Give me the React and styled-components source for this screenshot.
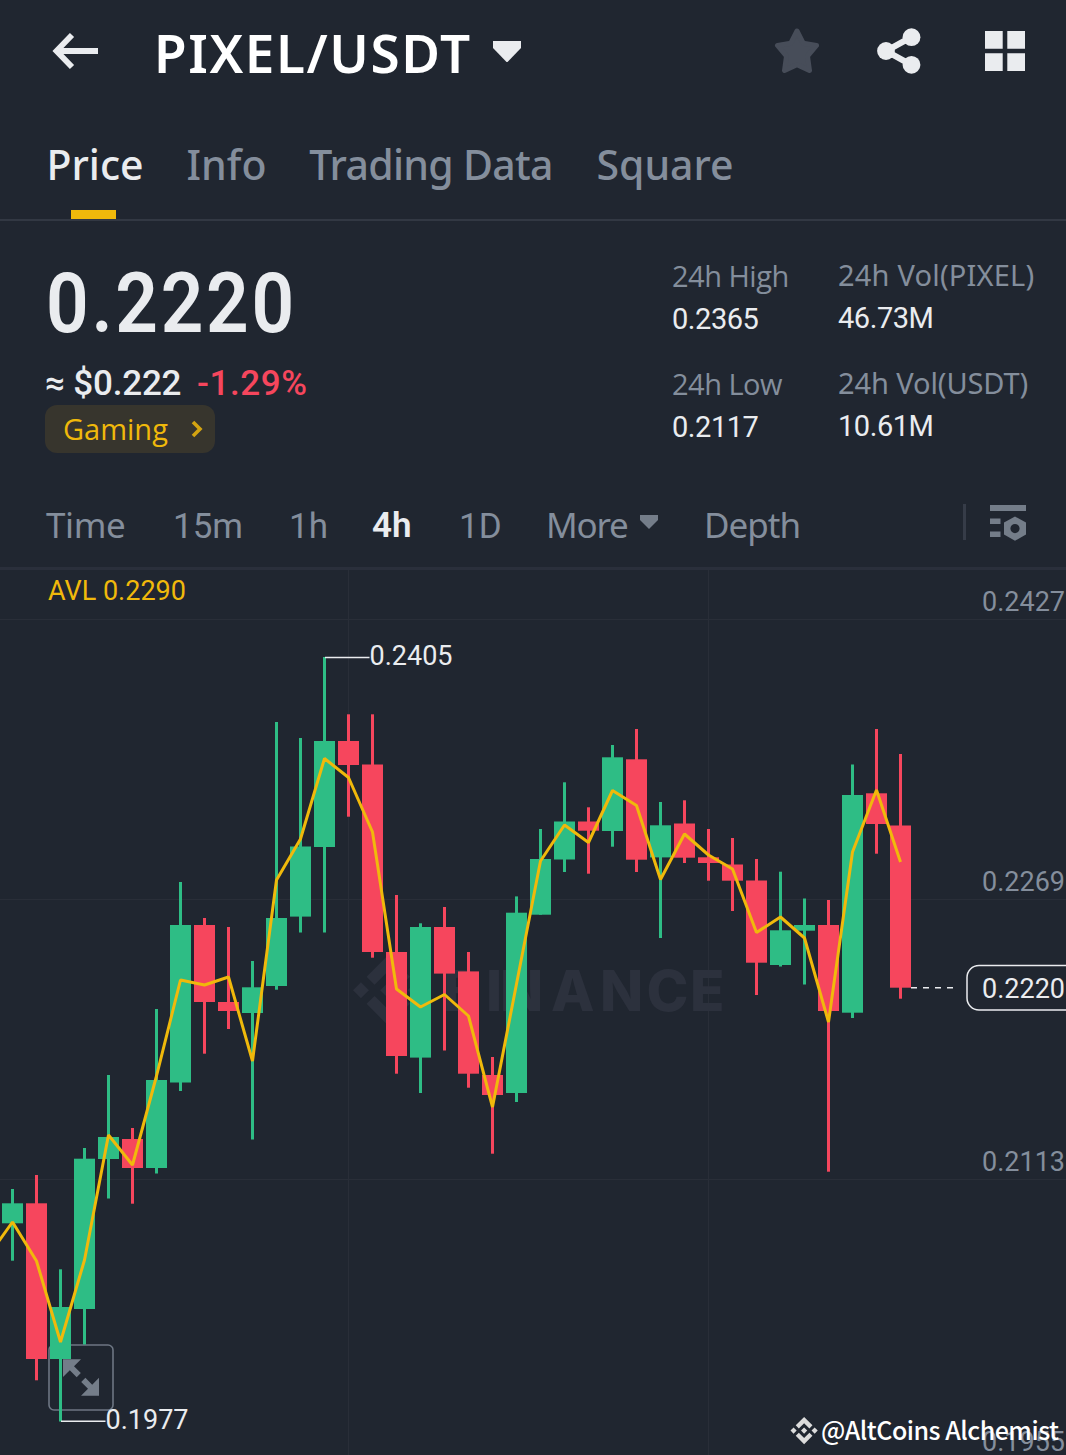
import React from 'react'
import styled, { createGlobalStyle } from 'styled-components'

const humanist = '"Noto Sans", "Open Sans", sans-serif'
const humanistG = '"Open Sans", "Noto Sans", sans-serif'
const digits = 'Roboto, "Liberation Sans", sans-serif'

const c = {
  bg: '#202630',
  line: '#323843',
  text: '#eaecef',
  muted: '#848e9c',
  icon: '#747d89',
  up: '#2ebd85',
  down: '#f6465d',
  brand: '#f0b90b',
}

const GlobalStyle = createGlobalStyle`
  * { box-sizing: border-box; }
  body { margin: 0; background: ${c.bg}; }
  svg { display: block; flex: none; }
`

const Screen = styled.main`
  width: 1066px;
  height: 1455px;
  overflow: hidden;
  display: flex;
  flex-direction: column;
  background: ${c.bg};
  color: ${c.text};
  font-family: ${humanist};
`

const Label = styled.span`
  display: block;
  white-space: nowrap;
  width: ${(p) => (p.$w ? `${p.$w}px` : 'auto')};
  font-family: ${(p) => p.$font || humanist};
  letter-spacing: ${(p) => p.$track || 0}px;
`

const Header = styled.header`
  height: 102px;
  flex: none;
  display: flex;
  align-items: center;
  padding: 0 41px 0 52px;
`

const Title = styled(Label).attrs({ as: 'h1' })`
  margin: 3px 24px 0 56px;
  font-size: 53px;
  line-height: 64px;
  font-weight: 600;
  color: #fff;
`

const Actions = styled.div`
  margin-left: auto;
  display: flex;
  align-items: center;
  gap: 58px;
`

const Tabs = styled.nav`
  flex: none;
  height: 119px;
  padding: 37px 0 0 47px;
  display: flex;
  gap: 45px;
  border-bottom: 2px solid ${c.line};
`

const Tab = styled.div`
  width: ${(p) => p.$w}px;
  display: flex;
  flex-direction: column;
  align-items: center;
  color: ${(p) => (p.$active ? c.text : c.muted)};
  font-size: 41px;
  line-height: 50px;
  font-weight: 500;
`

const TabBar = styled.i`
  width: 45px;
  height: 9px;
  margin: 21px 4px 0 0;
  background: ${c.brand};
`

const Summary = styled.section`
  flex: none;
  height: 254px;
  display: flex;
  padding: 34px 0 0 45px;
`

const Quote = styled.div`
  width: 627px;
  padding-top: 7px;
`

/* narrowed so the digits keep a DIN-like proportion */
const Price = styled(Label)`
  margin-left: 1px;
  font-size: 83px;
  line-height: 83px;
  font-weight: 600;
  transform: scaleX(0.9);
  transform-origin: left;
`

const SubPrice = styled.div`
  display: flex;
  margin-top: 19px;
  font-size: 35px;
  line-height: 40px;
  font-weight: 500;
`

const Change = styled(Label)`
  color: ${c.down};
`

const Chip = styled.div`
  display: flex;
  align-items: center;
  width: 170px;
  height: 48px;
  margin-top: 1px;
  padding: 0 12px 0 18px;
  justify-content: space-between;
  border-radius: 12px;
  background: #37352d;
  color: ${c.brand};
  font-size: 29px;
  line-height: 40px;
`

const Stats = styled.div`
  width: ${(p) => p.$w}px;
  margin-top: ${(p) => p.$top || 0}px;
  display: flex;
  flex-direction: column;
  gap: 23px;
  font-size: 29px;
  line-height: 42px;
`

const StatName = styled(Label)`
  color: ${c.muted};
  margin-bottom: 1px;
`

const Periods = styled.nav`
  flex: none;
  height: 95px;
  padding: 25px 40px 0 46px;
  display: flex;
  border-bottom: 3px solid #2a2f3b;
  font-size: 35px;
  line-height: 50px;
  color: ${c.muted};
`

const Period = styled(Label)`
  color: ${(p) => (p.$active ? c.text : 'inherit')};
  font-weight: ${(p) => (p.$active ? 600 : 400)};
  padding-top: ${(p) => (p.$font && !p.$active ? 2 : p.$active ? 1 : 0)}px;
`

const MoreCaret = styled.svg`
  margin: 15px 46px 0 0;
`

const Tools = styled.div`
  height: 36px;
  margin-top: 4px;
  margin-left: auto;
  padding-left: 24px;
  border-left: 3px solid #363c48;
`

const Chart = styled.svg`
  font-family: ${digits};
  font-size: 27px;
`

// [up, high, body top, body bottom, low, average]
const candles = [
  [1, 1189, 1203.3, 1223.3, 1260.7, 1222],
  [0, 1175, 1203.3, 1359, 1380.3, 1261],
  [1, 1269.3, 1307, 1359, 1421.5, 1342],
  [1, 1148, 1158.7, 1309, 1344.5, 1260],
  [1, 1075, 1137, 1159, 1198.5, 1135],
  [0, 1128, 1139, 1168, 1203.7, 1165],
  [1, 1009, 1080, 1168, 1173.5, 1076],
  [1, 882, 925, 1082.5, 1091, 980],
  [0, 918, 925, 1002, 1053.7, 985],
  [0, 927, 1002, 1011, 1029, 977],
  [1, 961, 987.3, 1013, 1139.5, 1061],
  [1, 722, 918, 986, 989.7, 880],
  [1, 738, 846.5, 916.6, 932.5, 839],
  [1, 657, 741, 847, 932.5, 758.5],
  [0, 714.3, 741, 765, 816.7, 777.5],
  [0, 714.3, 764.5, 952, 957.7, 832],
  [0, 895, 952, 1056, 1073.7, 989],
  [1, 923.3, 927, 1057.6, 1093, 1007],
  [0, 907, 927, 973.6, 1050.5, 994.5],
  [0, 952, 971.4, 1073.7, 1087.7, 1016],
  [0, 1057, 1075, 1095, 1153.7, 1107],
  [1, 896.4, 912.7, 1093, 1102, 984],
  [1, 829, 859, 914.7, 914.7, 861],
  [1, 782.3, 821.5, 859.5, 872, 825],
  [0, 807.3, 821.5, 830.7, 873.7, 842.5],
  [1, 745, 757.3, 831, 846.7, 790.5],
  [0, 729, 759.3, 859.7, 872, 805.5],
  [1, 802, 825.3, 857.4, 938, 879.5],
  [0, 800.3, 823.5, 857.7, 863, 834],
  [0, 829, 857.3, 863, 880.7, 855],
  [0, 838, 864.5, 880.7, 911, 869],
  [0, 859, 880.5, 962.7, 995, 932.5],
  [1, 871.7, 930.3, 965, 966.5, 917],
  [1, 898.5, 925, 930.7, 984.5, 938],
  [0, 900, 925, 1011, 1171.7, 1022],
  [1, 764.5, 795, 1012.7, 1018, 852],
  [0, 729, 793.3, 824, 853.7, 790],
  [0, 754, 825.5, 987.7, 998.7, 862],
]

const average = '-1,1241 ' + candles.map((d, i) => `${12.5 + i * 24},${d[5]}`).join(' ')

const BinanceMark = () => (
  <>
    <path d="M38.73 53.2l24.59-24.58 24.6 24.6 14.3-14.31L63.32 0l-38.9 38.9z" />
    <path d="M0 63.31L14.3 49l14.31 14.31-14.31 14.3z" />
    <path d="M38.73 73.41L63.32 98l24.6-24.6 14.31 14.29-38.91 38.92-38.91-38.88z" />
    <path d="M98 63.31L112.3 49l14.31 14.3-14.31 14.32z" />
    <path d="M77.83 63.3L63.32 48.78 48.81 63.28l14.51 14.5z" />
  </>
)

const PriceChart = () => (
  <Chart width="1066" height="885" viewBox="0 570 1066 885">
    <path
      d="M0 619.5H1066M0 899.5H1066M0 1179.5H1066M348.5 570V1455M708.5 570V1455"
      stroke="#292e38"
      fill="none"
    />

    <g fill="#2c313d">
      <g transform="translate(353 955) scale(.557)">
        <BinanceMark />
      </g>
      <text
        x="443 486 500 551 600 646.5 690"
        y="1010.5"
        fontFamily="Inter, sans-serif"
        fontWeight="800"
        fontSize="56.5"
      >
        BINANCE
      </text>
    </g>

    <rect x="49" y="1345" width="64" height="65" rx="5" fill="none" stroke="#6d7683" strokeWidth="1.6" />
    <g fill="#747d89">
      <path d="M63 1359.3H81L74 1366.2L80.8 1373L76.7 1377.2L69.8 1370.3L63 1377Z" />
      <path d="M99 1395.8H81L88 1388.8L81.2 1382L85.4 1377.8L92.2 1384.7L99 1377.7Z" />
    </g>

    {candles.map(([up, high, top, bottom, low], i) => (
      <g key={i} fill={up ? c.up : c.down}>
        <rect x={11 + i * 24} y={high} width="3" height={low - high} />
        <rect x={2 + i * 24} y={top} width="21" height={bottom - top} />
      </g>
    ))}
    <polyline points={average} fill="none" stroke={c.brand} strokeWidth="3" strokeLinejoin="bevel" />

    <g fill="none" stroke={c.text} strokeWidth="1.5">
      <path d="M325 657.5H369.5M61 1421.2H105.5" />
      <path d="M911 987.8H955" strokeDasharray="6 6" />
      <rect x="967" y="965.5" width="130" height="44.5" rx="12" fill={c.bg} />
    </g>

    <text x="48" y="600" fill={c.brand} textLength="138">AVL 0.2290</text>
    <g fill={c.text}>
      <text x="369.5" y="665">0.2405</text>
      <text x="105.5" y="1429">0.1977</text>
      <text x="982" y="997.7">0.2220</text>
    </g>
    <g fill={c.muted}>
      <text x="982" y="611">0.2427</text>
      <text x="982" y="891">0.2269</text>
      <text x="982" y="1171">0.2113</text>
      <text x="982" y="1451">0.1955</text>
    </g>

    <g transform="translate(790.5 1417) scale(.215)" fill="#dcdcdc">
      <BinanceMark />
    </g>
    <text
      x="821"
      y="1440"
      fill="#fff"
      fontFamily='"Noto Sans CJK SC", sans-serif'
      fontSize="25"
      fontWeight="500"
      textLength="238"
    >
      @AltCoins Alchemist
    </text>
  </Chart>
)

const App = () => {
  return (
    <>
      <GlobalStyle />
      <Screen>
        <Header>
          <svg width="46" height="36" viewBox="0 0 46 36" fill="none" stroke={c.text} strokeWidth="5.8">
            <path d="M4 18H46M20 2L4.5 18L20 34" />
          </svg>
          <Title $w={315} $track={1.6}>PIXEL/USDT</Title>
          <svg width="28" height="21" viewBox="0 0 28 21" fill={c.text}>
            <path d="M0 0H28V7L14 21.5L0 7Z" />
          </svg>
          <Actions>
            <svg width="45" height="46" viewBox="0 0 45 46">
              <path
                d="M23 3L29.2 15.2L42.5 17.5L33.5 28.2L35.5 42.5L23 36.8L10.5 42.5L12.5 28.2L3.5 17.5L16.8 15.2Z"
                fill="#474d59"
                stroke="#474d59"
                strokeWidth="5"
                strokeLinejoin="round"
              />
            </svg>
            <svg width="44" height="46" viewBox="0 0 44 46" fill={c.text}>
              <path d="M34.5 9L9 23L34.5 37" fill="none" stroke={c.text} strokeWidth="6" />
              <circle cx="34.5" cy="9.2" r="8.9" />
              <circle cx="9" cy="23" r="8.9" />
              <circle cx="34.5" cy="36.8" r="8.9" />
            </svg>
            <svg width="46" height="40" viewBox="-6 0 46 40" fill={c.text}>
              <path d="M0 0H17.7V17.7H0ZM22.3 0H40V17.7H22.3ZM0 22.3H17.7V40H0ZM22.3 22.3H40V40H22.3Z" />
            </svg>
          </Actions>
        </Header>

        <Tabs>
          <Tab $w={96} $active>
            <Label>Price</Label>
            <TabBar />
          </Tab>
          <Tab $w={77}>
            <Label>Info</Label>
          </Tab>
          <Tab $w={242}>
            <Label $track={-0.7}>Trading Data</Label>
          </Tab>
          <Tab $w={136}>
            <Label>Square</Label>
          </Tab>
        </Tabs>

        <Summary>
          <Quote>
            <Price $font={digits} $track={3}>0.2220</Price>
            <SubPrice>
              <Label $font={digits} $w={152} $track={-0.2}>≈ $0.222</Label>
              <Change $font={digits} $track={0.6}>-1.29%</Change>
            </SubPrice>
            <Chip>
              <Label $font={humanistG}>Gaming</Label>
              <svg width="12" height="18" viewBox="0 0 12 18" fill="none" stroke="#d3a411" strokeWidth="3.6">
                <path d="M2 2L9 9L2 16" />
              </svg>
            </Chip>
          </Quote>
          <Stats $w={166}>
            <div>
              <StatName $font={humanistG} $track={-0.5}>24h High</StatName>
              <Label $font={digits} $track={-0.45}>0.2365</Label>
            </div>
            <div>
              <StatName $font={humanistG} $track={-0.5}>24h Low</StatName>
              <Label $font={digits} $track={-0.45}>0.2117</Label>
            </div>
          </Stats>
          <Stats $w={228} $top={-1}>
            <div>
              <StatName $track={0.2}>24h Vol(PIXEL)</StatName>
              <Label $font={digits} $track={-0.45}>46.73M</Label>
            </div>
            <div>
              <StatName $track={-0.1}>24h Vol(USDT)</StatName>
              <Label $font={digits} $track={-0.45}>10.61M</Label>
            </div>
          </Stats>
        </Summary>

        <Periods>
          <Period $w={127} $track={-0.4}>Time</Period>
          <Period $w={116} $font={digits}>15m</Period>
          <Period $w={83} $font={digits}>1h</Period>
          <Period $w={87} $font={digits} $active>4h</Period>
          <Period $w={87} $font={digits}>1D</Period>
          <Period $w={94} $track={-1.2}>More</Period>
          <MoreCaret width="18" height="14" viewBox="0 0 18 14" fill={c.icon}>
            <path d="M0 0H18V5L9 14L0 5Z" />
          </MoreCaret>
          <Period $track={-1}>Depth</Period>
          <Tools>
            <svg width="36" height="37" viewBox="0 0 36 37" fill={c.icon}>
              <path d="M0 1H36V7H0ZM0 14.5H10.5V20H0ZM0 27.5H10.5V33H0Z" />
              <path
                fillRule="evenodd"
                d="M25 12.5L36 18.5V30.5L25 36.7L14 30.5V18.5ZM25 20A4.6 4.6 0 1 0 25 29.2A4.6 4.6 0 1 0 25 20Z"
              />
            </svg>
          </Tools>
        </Periods>

        <PriceChart />
      </Screen>
    </>
  )
}

export default App
